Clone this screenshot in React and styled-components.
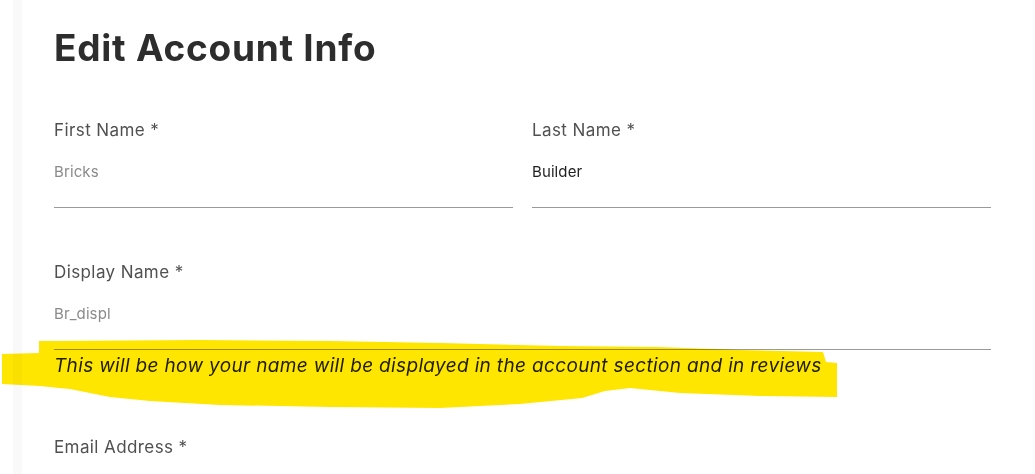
import styled, { createGlobalStyle } from 'styled-components';

const GlobalStyle = createGlobalStyle`
  html, body {
    margin: 0;
    background: #fff;
  }
  body {
    font-family: Inter, "Noto Sans", "Liberation Sans", sans-serif;
  }
`;

const Page = styled.div`
  position: relative;
  display: flex;
  width: 1035px;
  height: 474px;
  overflow: hidden;
  background: #fff;
`;

const Rail = styled.div`
  flex: 0 0 9px;
  margin-left: 13px;
  background: #f9f9fa;
`;

const Main = styled.main`
  flex: 1;
  padding: 0 44px 0 32px;
`;

const Heading = styled.h1`
  margin: 26px 0 0;
  font-size: 37px;
  line-height: 1.2;
  font-weight: 700;
  color: #2d2d2d;
  letter-spacing: 0.75px;
`;

const Row = styled.div`
  display: grid;
  grid-template-columns: 1fr 1fr;
  column-gap: 19px;
  margin-top: ${(p) => p.$top}px;
`;

const Field = styled.label`
  display: flex;
  flex-direction: column;
  margin-top: ${(p) => p.$top || 0}px;
`;

const Label = styled.span`
  font-size: 17px;
  line-height: 22px;
  letter-spacing: 0.4px;
  color: #505050;
`;

const Input = styled.input`
  display: block;
  width: 100%;
  box-sizing: border-box;
  margin: 20px 0 0;
  padding: 0 0 26px;
  height: 47px;
  border: none;
  border-bottom: 1px solid #9a9a9a;
  background: transparent;
  font-family: inherit;
  font-size: 15px;
  line-height: 20px;
  letter-spacing: 0.1px;
  color: #1f1f1f;
  outline: none;

  &::placeholder {
    color: #8a8a8a;
    opacity: 1;
  }
`;

const Hint = styled.p`
  margin: 4px 0 0;
  font-size: 19px;
  line-height: 24px;
  letter-spacing: 0.34px;
  font-style: italic;
  color: #1f1f1f;
`;

const Highlight = styled.svg`
  position: absolute;
  top: 0;
  left: 0;
  pointer-events: none;
  mix-blend-mode: multiply;
`;

function Marker() {
  return (
    <Highlight width="1035" height="474" viewBox="0 0 1035 474">
      <path
        fill="#ffe600"
        d="M39 353 L39 341 L200 340 L330 341 L440 343 L560 346 L658 347 L740 350 L823 352 L826 362 L837 363 L837 397 L760 396 L680 393 L630 388 L605 391 L582 398 L520 404 L440 408 L330 407 L220 405 L150 401 L110 397 L70 389 L40 386 L2 384 L2 354 Z"
      />
    </Highlight>
  );
}

export default function App() {
  return (
    <Page>
      <GlobalStyle />
      <Rail />
      <Main>
        <Heading>Edit Account Info</Heading>
        <Row $top={49}>
          <Field>
            <Label>First Name *</Label>
            <Input placeholder="Bricks" />
          </Field>
          <Field>
            <Label>Last Name *</Label>
            <Input defaultValue="Builder" />
          </Field>
        </Row>
        <Field $top={53}>
          <Label>Display Name *</Label>
          <Input placeholder="Br_displ" />
        </Field>
        <Hint>
          This will be how your name will be displayed in the account section
          and in reviews
        </Hint>
        <Field $top={58}>
          <Label>Email Address *</Label>
        </Field>
      </Main>
      <Marker />
    </Page>
  );
}
